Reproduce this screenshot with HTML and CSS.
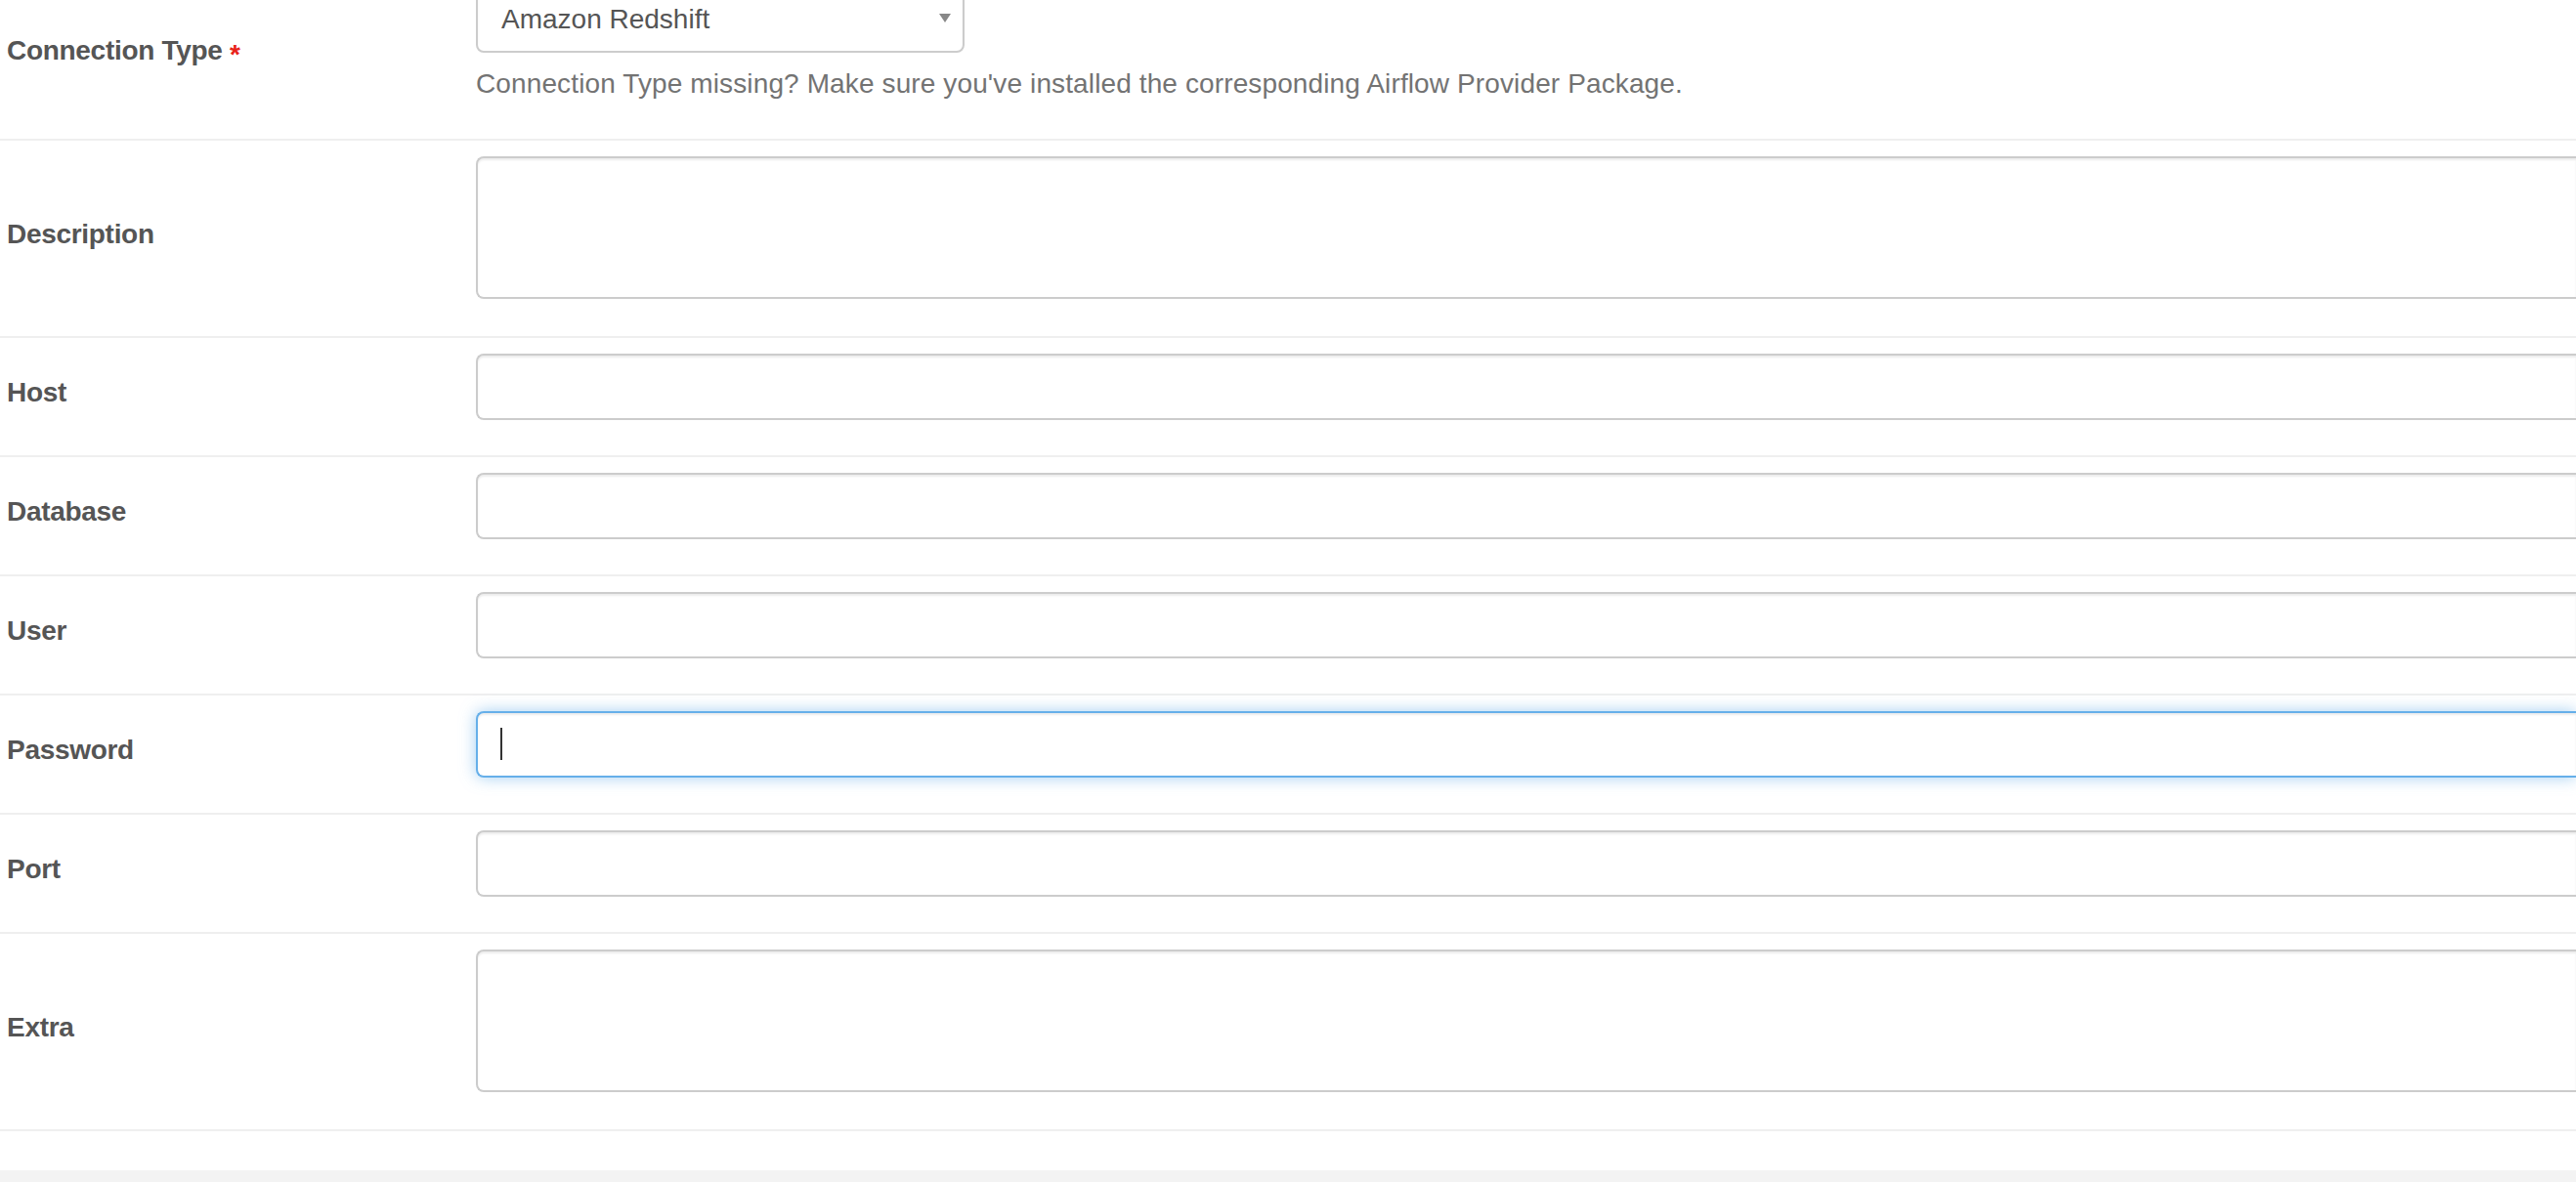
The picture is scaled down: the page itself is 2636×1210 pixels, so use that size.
FILE: index.html
```html
<!DOCTYPE html>
<html lang="en">

<head>
    <meta charset="UTF-8">
    <meta name="viewport" content="width=device-width, initial-scale=1.0">
    <title>Edit Connection</title>
    <link rel="stylesheet" href="styles.css">
</head>

<body>
    <form action="#" method="post" class="conn-form">
        <table class="form-table">
            <tr>
                <th><label for="conn_type">Connection Type <strong class="required">*</strong></label></th>
                <td>
                    <div class="select-wrap">
                        <select id="conn_type" name="conn_type" class="form-control">
                            <option>Amazon Redshift</option>
                        </select>
                    </div>
                    <span class="help-block">Connection Type missing? Make sure you've installed the corresponding Airflow Provider Package.</span>
                </td>
            </tr>
            <tr>
                <th><label for="description">Description</label></th>
                <td><textarea id="description" name="description" class="form-control"></textarea></td>
            </tr>
            <tr>
                <th><label for="host">Host</label></th>
                <td><input type="text" id="host" name="host" class="form-control"></td>
            </tr>
            <tr>
                <th><label for="schema">Database</label></th>
                <td><input type="text" id="schema" name="schema" class="form-control"></td>
            </tr>
            <tr>
                <th><label for="login">User</label></th>
                <td><input type="text" id="login" name="login" class="form-control"></td>
            </tr>
            <tr>
                <th><label for="password">Password</label></th>
                <td>
                    <div class="caret-wrap">
                        <input type="password" id="password" name="password" class="form-control is-focused">
                        <span class="caret"></span>
                    </div>
                </td>
            </tr>
            <tr>
                <th><label for="port">Port</label></th>
                <td><input type="text" id="port" name="port" class="form-control"></td>
            </tr>
            <tr>
                <th><label for="extra">Extra</label></th>
                <td><textarea id="extra" name="extra" class="form-control"></textarea></td>
            </tr>
        </table>
    </form>
    <div class="footer-bar"></div>
</body>

</html>
```

FILE: styles.css
```css
* {
    box-sizing: border-box;
}

body {
    margin: 0;
    overflow: hidden;
    background: #fff;
    color: #555;
    font-family: "Liberation Sans", Helvetica, Arial, sans-serif;
    font-size: 28px;
    line-height: 40px;
}

.form-table {
    border-collapse: collapse;
    width: 100%;
    margin-top: -32px;
    margin-bottom: 40px;
    border-bottom: 2px solid #efefef;
}

.form-table th,
.form-table td {
    border-top: 2px solid #efefef;
    vertical-align: middle;
    text-align: left;
}

.form-table th {
    width: 471px;
    padding: 16px 0 16px 7px;
}

.form-table th label {
    display: inline-block;
    margin-bottom: 8px;
    font-weight: bold;
    color: #555;
    letter-spacing: -0.3px;
}

.required {
    color: #e8231a;
    position: relative;
    top: 4px;
}

.form-table td {
    padding: 16px 0 16px 16px;
}

/* fields run on past the right side of the window */
.form-control {
    display: block;
    width: 100%;
    height: 68px;
    margin: 0 0 20px;
    padding: 12px 24px;
    font-family: inherit;
    font-size: 28px;
    line-height: 40px;
    color: #555;
    background: #fff;
    border: 2px solid #ccc;
    border-right: 0;
    border-radius: 8px 0 0 8px;
    box-shadow: inset 0 2px 2px rgba(0, 0, 0, .075);
    outline: none;
}

textarea.form-control {
    height: 146px;
    margin-bottom: 22px;
    resize: none;
}

.form-control.is-focused {
    border-color: #66afe9;
    box-shadow: inset 0 2px 2px rgba(0, 0, 0, .075), 0 0 16px rgba(102, 175, 233, .6);
}

/* select with the little grey triangle */
.select-wrap {
    position: relative;
    width: 500px;
}

.select-wrap select {
    appearance: none;
    -webkit-appearance: none;
    margin-bottom: 0;
    border-right: 2px solid #ccc;
    border-radius: 8px;
}

.select-wrap::after {
    content: "";
    position: absolute;
    right: 14px;
    top: 28px;
    border-top: 9px solid #888;
    border-left: 6px solid transparent;
    border-right: 6px solid transparent;
}

.help-block {
    display: block;
    margin: 12px 0 20px;
    color: #737373;
    letter-spacing: 0.12px;
}

.caret-wrap {
    position: relative;
}

.caret {
    position: absolute;
    left: 25px;
    top: 17px;
    width: 2px;
    height: 33px;
    background: #333;
}

.footer-bar {
    height: 13px;
    background: #f3f3f3;
}
```
